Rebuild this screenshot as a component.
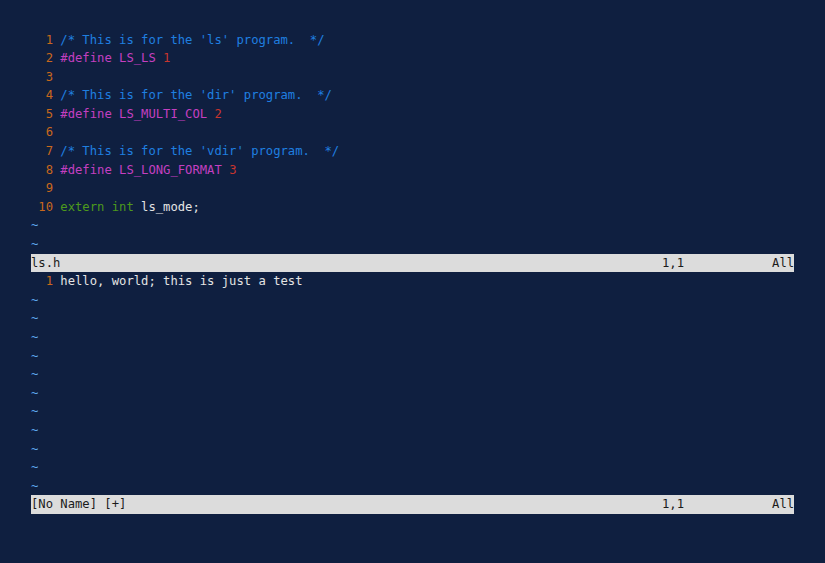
import React from 'react';

const C = {
  nr: 'text-[#c9681c]',
  cm: 'text-[#1f7fe0]',
  pp: 'text-[#c43fc0]',
  num: 'text-[#c8352e]',
  ty: 'text-[#4d9a1c]',
  tx: 'text-[#e4e4e4]',
  tl: 'text-[#5ea6ee]',
};

const Row = ({ children }) => (
  <div className="h-[18.6px] leading-[18.6px] whitespace-pre">{children}</div>
);

const Num = ({ n }) => <span className={C.nr}>{String(n).padStart(3, ' ') + ' '}</span>;

const Tilde = () => (
  <Row>
    <span className={C.tl}>~</span>
  </Row>
);

// 104 columns, ruler starts at col 86
const Status = ({ name }) => (
  <div className="h-[18.6px] leading-[18.6px] whitespace-pre bg-[#dcdcdc] text-[#1b1b1b]">
    {name.padEnd(86, ' ') + '1,1'.padEnd(15, ' ') + 'All'}
  </div>
);

const App = () => {
  return (
    <div
      className="w-[825px] h-[563px] bg-[#0f1f40] pl-[31px] pt-[30.5px] text-[12.2px]"
      style={{ fontFamily: '"DejaVu Sans Mono", "Liberation Mono", monospace' }}
    >
      <div className="w-[763px]">
        <Row><Num n={1} /><span className={C.cm}>/* This is for the 'ls' program.  */</span></Row>
        <Row><Num n={2} /><span className={C.pp}>#define LS_LS </span><span className={C.num}>1</span></Row>
        <Row><Num n={3} /></Row>
        <Row><Num n={4} /><span className={C.cm}>/* This is for the 'dir' program.  */</span></Row>
        <Row><Num n={5} /><span className={C.pp}>#define LS_MULTI_COL </span><span className={C.num}>2</span></Row>
        <Row><Num n={6} /></Row>
        <Row><Num n={7} /><span className={C.cm}>/* This is for the 'vdir' program.  */</span></Row>
        <Row><Num n={8} /><span className={C.pp}>#define LS_LONG_FORMAT </span><span className={C.num}>3</span></Row>
        <Row><Num n={9} /></Row>
        <Row>
          <Num n={10} />
          <span className={C.ty}>extern int </span>
          <span className={C.tx}>ls_mode;</span>
        </Row>
        <Tilde />
        <Tilde />
        <Status name="ls.h" />
        <Row><Num n={1} /><span className={C.tx}>hello, world; this is just a test</span></Row>
        {Array.from({ length: 11 }).map((_, i) => (
          <Tilde key={i} />
        ))}
        <Status name="[No Name] [+]" />
      </div>
    </div>
  );
};

export default App;
